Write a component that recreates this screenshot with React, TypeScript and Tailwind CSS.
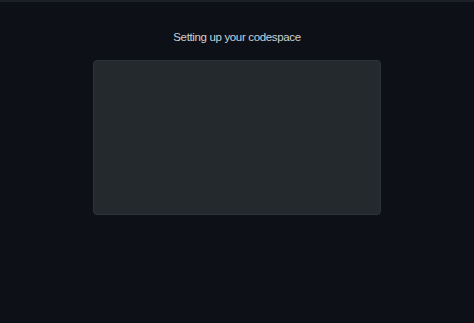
export default function App() {
  return (
    <div className="w-[474px] h-[323px] bg-[#0d1117] flex flex-col overflow-hidden" style={{ fontFamily: '"Liberation Sans", Arial, sans-serif' }}>
      <div className="h-[2px] bg-[#1c2128] shrink-0" />
      <div className="flex flex-col items-center pt-[28px]">
        <div className="text-[11.5px] leading-[14px] tracking-[-0.35px] text-[#c9d1d9]">Setting up your codespace</div>
        <div className="mt-[16px] w-[288px] h-[155px] rounded-[4px] bg-[#24292e] border border-[#2d333b]" />
      </div>
    </div>
  );
}
